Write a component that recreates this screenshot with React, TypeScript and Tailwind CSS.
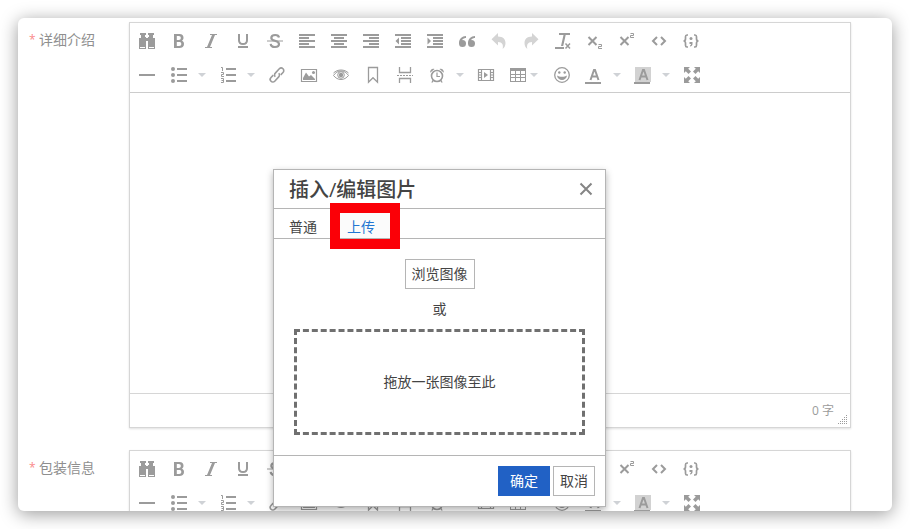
// App.tsx
import { Fragment, type ReactNode } from "react";

type Tool = {
  name: string;
  icon: ReactNode;
  disabled?: boolean;
  menu?: "split" | "inline";
};

const line = { fill: "none", stroke: "currentColor" };

const topRow: Tool[] = [
  {
    name: "查找替换",
    icon: (
      <>
        <path d="M1 0h6v2H6v2h1v1h2V4h1V2H9V0h6v2h-1v3h2v11H9V8H7v8H0V5h2V2H1z" />
        <path d="M1 14.500h5M10 14.500h5" stroke="#fff" />
      </>
    ),
  },
  {
    name: "粗体",
    icon: (
      <path
        fillRule="evenodd"
        d="M3 1h5.500C11.300 1 12.500 2.500 12.500 4.700c0 1.400-.6 2.400-1.600 3 1.400.5 2.100 1.600 2.100 3.200 0 2.500-1.800 4.100-4.700 4.100H3zM5.800 3.100v3.800h1.900c1.500 0 2.100-.7 2.100-1.900s-.6-1.900-2.100-1.900zM5.800 9v3.900h2.300c1.500 0 2.200-.7 2.200-2S9.600 9 8.100 9z"
      />
    ),
  },
  {
    name: "斜体",
    icon: <path d="M7 1h7v1h-2L7 14h2v1H2v-1h2L9 2H7z" />,
  },
  {
    name: "下划线",
    icon: (
      <>
        <path d="M4 1v6.200C4 9.500 5.500 11 8 11s4-1.500 4-3.800V1" strokeWidth="2" {...line} />
        <path d="M3 13h10v2H3z" />
      </>
    ),
  },
  {
    name: "删除线",
    icon: (
      <>
        <path
          d="M12 4.500C11.800 2.900 10.300 2 8.200 2 6 2 4.300 3 4.300 4.900 4.300 8.500 12 7 12 11c0 2-1.800 3-4 3-2.500 0-4.200-1.100-4.300-3.100"
          strokeWidth="2.200"
          {...line}
        />
        <path d="M0 7.500h16v1H0z" />
      </>
    ),
  },
  { name: "左对齐", icon: <path d="M0 1h16v2H0zM0 4h10v2H0zM0 7h16v2H0zM0 10h10v2H0zM0 13h16v2H0z" /> },
  { name: "居中", icon: <path d="M0 1h16v2H0zM3 4h10v2H3zM0 7h16v2H0zM3 10h10v2H3zM0 13h16v2H0z" /> },
  { name: "右对齐", icon: <path d="M0 1h16v2H0zM6 4h10v2H6zM0 7h16v2H0zM6 10h10v2H6zM0 13h16v2H0z" /> },
  {
    name: "减少缩进",
    icon: <path d="M0 1h16v2H0zM6 4h10v2H6zM6 7h10v2H6zM6 10h10v2H6zM0 13h16v2H0zM4 4.500v7L.500 8z" />,
  },
  {
    name: "增加缩进",
    icon: <path d="M0 1h16v2H0zM6 4h10v2H6zM6 7h10v2H6zM6 10h10v2H6zM0 13h16v2H0zM.500 4.500v7L4 8z" />,
  },
  {
    name: "引用",
    icon: (
      <path d="M3.500 7A3.500 3.500 0 1 1 0 10.500L0 10c0-4 3-7 7-7v2C5.700 5 4.400 5.500 3.500 6.500l-.6.7zM12.500 7A3.500 3.500 0 1 1 9 10.500L9 10c0-4 3-7 7-7v2c-1.300 0-2.600.5-3.500 1.500l-.6.7z" />
    ),
  },
  {
    name: "撤销",
    disabled: true,
    icon: <path d="M7 0v3.500c5 0 7.500 2.800 7.500 6.500 0 2.500-1 4.500-2.800 6 .8-4-.2-7-4.700-7v3.500L.500 6.200z" />,
  },
  {
    name: "重做",
    disabled: true,
    icon: <path d="M9 0v3.500c-5 0-7.500 2.800-7.500 6.500 0 2.500 1 4.500 2.800 6-.8-4 .2-7 4.700-7v3.500l6.500-6.300z" />,
  },
  {
    name: "清除格式",
    icon: (
      <>
        <path d="M4 0h11v2h-4.300L8.200 13H6L8.500 2H4zM0 14h9v2H0z" />
        <path d="M10.500 10.500l4.500 5M15 10.500l-4.500 5" strokeWidth="1.500" {...line} />
      </>
    ),
  },
  {
    name: "下标",
    icon: (
      <>
        <path d="M1.500 4l8 8M9.500 4l-8 8" strokeWidth="2" {...line} />
        <path d="M11.500 11.500h3v2h-3v2H15" {...line} />
      </>
    ),
  },
  {
    name: "上标",
    icon: (
      <>
        <path d="M1.500 4l8 8M9.500 4l-8 8" strokeWidth="2" {...line} />
        <path d="M11.500.500h3v2h-3v2H15" {...line} />
      </>
    ),
  },
  {
    name: "源代码",
    icon: <path d="M6 4L2 8l4 4M10 4l4 4-4 4" strokeWidth="2" {...line} />,
  },
  {
    name: "代码示例",
    icon: (
      <>
        <path
          d="M5 2H4C2.800 2 2.500 2.600 2.500 3.700v2C2.500 7 2 8 .500 8 2 8 2.500 9 2.500 10.300v2c0 1.100.3 1.700 1.500 1.700h1M11 2h1c1.200 0 1.500.6 1.500 1.700v2C13.500 7 14 8 15.500 8c-1.500 0-2 1-2 2.300v2c0 1.100-.3 1.700-1.500 1.700h-1"
          strokeWidth="1.700"
          {...line}
        />
        <circle cx="8" cy="5.500" r="1.500" />
        <path d="M6.500 9h3v2c0 1.500-1 2.300-2.500 2.500v-1c.7-.2 1-.6 1-1.500H6.500z" />
      </>
    ),
  },
];

const bottomRow: Tool[] = [
  { name: "水平线", icon: <path d="M0 7h16v2H0z" /> },
  {
    name: "项目符号列表",
    menu: "split",
    icon: (
      <>
        <circle cx="2" cy="2" r="2" />
        <circle cx="2" cy="8" r="2" />
        <circle cx="2" cy="14" r="2" />
        <path d="M6 1h10v2H6zM6 7h10v2H6zM6 13h10v2H6z" />
      </>
    ),
  },
  {
    name: "编号列表",
    menu: "split",
    icon: (
      <>
        <path d="M6 1h10v2H6zM6 7h10v2H6zM6 13h10v2H6z" />
        <path d="M1 .500h1.500V4M1 5.500h2.500v2h-2v2H4M1 11.500h2.500v4H1M1.500 13.500h2" {...line} />
      </>
    ),
  },
  {
    name: "链接",
    icon: (
      <g strokeWidth="1.600" {...line}>
        <path d="M6.300 9.700c-1-1-1-2.600 0-3.600l4-4.300c1-1 2.700-1 3.700 0s1 2.700 0 3.700l-2.300 2.400" />
        <path d="M9.700 6.300c1 1 1 2.600 0 3.600l-4 4.300c-1 1-2.700 1-3.700 0s-1-2.700 0-3.700l2.300-2.400" />
      </g>
    ),
  },
  {
    name: "图片",
    icon: (
      <>
        <path d="M.500 2.500h15v12H.500z" strokeWidth="1.200" {...line} />
        <path d="M2 13v-2l3-5.500L8 9.500 10 8l4 4v1H2z" />
        <circle cx="12.500" cy="5.500" r="1.500" />
      </>
    ),
  },
  {
    name: "预览",
    icon: (
      <>
        <path d="M.500 8.500C2.500 5.500 5 4 8 4s5.500 1.500 7.500 4.500C13.500 11 11 12.500 8 12.500S2.500 11 .500 8.500z" {...line} />
        <path d="M.500 6C4.500 2 11.500 2 15.500 6" {...line} />
        <circle cx="8" cy="8" r="3.300" {...line} />
        <circle cx="8" cy="8" r="2.200" />
      </>
    ),
  },
  {
    name: "书签",
    icon: <path d="M3.500.500h9v14.700L8 10.700 3.500 15.200z" strokeWidth="1.300" {...line} />,
  },
  {
    name: "分页符",
    icon: (
      <>
        <path d="M2.500 0v5.500h11V0M2.500 16v-4.500h11V16" strokeWidth="1.300" {...line} />
        <path d="M0 8.500h16" strokeDasharray="2 1" {...line} />
      </>
    ),
  },
  {
    name: "日期时间",
    menu: "split",
    icon: (
      <>
        <circle cx="8" cy="9" r="5.500" strokeWidth="1.600" {...line} />
        <path d="M8 5.500v4h3" strokeWidth="1.200" {...line} />
        <path d="M1.200 5.700C.700 3.500 3 1 5.500 2zM14.800 5.700c.5-2.200-1.800-4.700-4.300-3.700zM3.500 13l-1.200 2.500h1.500l1-1.700zM12.500 13l1.200 2.500h-1.500l-1-1.700z" />
      </>
    ),
  },
  {
    name: "媒体",
    icon: (
      <>
        <path d="M.500 2.500h15v11H.500zM3.500 2.500v11M12.500 2.500v11" strokeWidth="1.200" {...line} />
        <path d="M1 5.500h3M1 8h3M1 10.500h3M12 5.500h3M12 8h3M12 10.500h3" {...line} />
        <path d="M6 5l4 3-4 3z" />
      </>
    ),
  },
  {
    name: "表格",
    menu: "inline",
    icon: <path fillRule="evenodd" d="M0 1h16v14H0zM1 4v3h4V4zM6 4v3h4V4zM11 4v3h4V4zM1 8v2h4V8zM6 8v2h4V8zM11 8v2h4V8zM1 11v3h4v-3zM6 11v3h4v-3zM11 11v3h4v-3z" />,
  },
  {
    name: "表情",
    icon: (
      <>
        <circle cx="8" cy="8" r="7.300" strokeWidth="1.300" {...line} />
        <circle cx="5.300" cy="5.500" r="1.200" />
        <circle cx="10.700" cy="5.500" r="1.200" />
        <path d="M3 8.500c2.500 1.700 7.500 1.700 10 0-.4 2.800-2.500 4.500-5 4.500s-4.600-1.700-5-4.500z" />
      </>
    ),
  },
  {
    name: "文字颜色",
    menu: "split",
    icon: (
      <>
        <path d="M-1 15h16v2H-1z" />
        <path d="M4.500 13L8 3h1l3.500 10M6 9.500h5" strokeWidth="2" {...line} />
      </>
    ),
  },
  {
    name: "背景颜色",
    menu: "split",
    icon: (
      <>
        <path d="M0 0h16v15H0z" fill="#d2d2d2" />
        <path d="M-1 15h16v2H-1z" />
        <path d="M4.500 13L8 3h1l3.500 10M6 9.500h5" strokeWidth="2" {...line} />
      </>
    ),
  },
  {
    name: "全屏",
    icon: (
      <path d="M0 0h6L4.200 1.800 7 4.500 4.500 7 1.800 4.200 0 6zM16 0v6l-1.800-1.800L11.500 7 9 4.500l2.800-2.700L10 0zM0 16v-6l1.800 1.800L4.500 9 7 11.500l-2.800 2.700L6 16zM16 16h-6l1.800-1.800L9 11.500 11.500 9l2.700 2.800L16 10z" />
    ),
  },
];

function Icon({ children }: { children: ReactNode }) {
  return (
    <svg viewBox="0 0 16 16" className="size-4 shrink-0 overflow-visible fill-current" aria-hidden="true">
      {children}
    </svg>
  );
}

function Caret() {
  return (
    <svg viewBox="0 0 8 4" className="h-1 w-2 shrink-0 fill-[#cfd2d6]" aria-hidden="true">
      <path d="M0 0h8L4 4z" />
    </svg>
  );
}

function ToolRow({ tools }: { tools: Tool[] }) {
  return (
    <div className="flex h-[34px] items-center">
      {tools.map((t) => (
        <Fragment key={t.name}>
          <button
            type="button"
            aria-label={t.name}
            disabled={t.disabled}
            className="flex h-full shrink-0 items-center gap-1 px-2 text-[#9b9b9b] disabled:text-[#d4d4d4]"
          >
            <Icon>{t.icon}</Icon>
            {t.menu === "inline" && <Caret />}
          </button>
          {t.menu === "split" && (
            <button type="button" aria-label={t.name + "选项"} className="flex h-full w-[17px] shrink-0 items-center pl-[3px]">
              <Caret />
            </button>
          )}
        </Fragment>
      ))}
    </div>
  );
}

function EditorField({ id, label, wordCount }: { id: string; label: string; wordCount?: number }) {
  return (
    <div className="flex">
      <label htmlFor={id} className="flex h-9 w-[111px] shrink-0 items-center gap-1 pl-[11px] text-sm text-[#8f8f8f]">
        <span className="w-[6px] text-xs text-[#fa8a8a]">*</span>
        {label}
      </label>
      <div className="min-w-0 flex-1 border border-[#d6d6d6] shadow-[0_1px_2px_rgba(0,0,0,0.12)]">
        <div className="border-b border-[#cccccc] pt-px pl-px">
          <ToolRow tools={topRow} />
          <ToolRow tools={bottomRow} />
        </div>
        <textarea id={id} className="block h-[300px] w-full resize-none p-2 text-sm outline-none" />
        <div className="flex h-[34px] items-center justify-end gap-1 border-t border-[#d6d6d6] pr-[2px] text-xs text-[#9b9b9b]">
          {wordCount !== undefined && <span>{wordCount} 字</span>}
          <svg viewBox="0 0 10 10" className="mb-[2px] size-[10px] self-end fill-[#9b9b9b]" aria-hidden="true">
            <path d="M8 0h1v1H8zM6 2h1v1H6zM8 2h1v1H8zM4 4h1v1H4zM6 4h1v1H6zM8 4h1v1H8zM2 6h1v1H2zM4 6h1v1H4zM6 6h1v1H6zM8 6h1v1H8zM0 8h1v1H0zM2 8h1v1H2zM4 8h1v1H4zM6 8h1v1H6zM8 8h1v1H8z" />
          </svg>
        </div>
      </div>
    </div>
  );
}

function ImageDialog() {
  return (
    <div
      role="dialog"
      aria-labelledby="dialog-title"
      className="w-[333px] border border-[#b5b5b5] bg-white text-sm text-[#444444] shadow-[0_3px_7px_rgba(0,0,0,0.3)]"
    >
      <div className="flex h-[39px] items-center justify-between border-b border-[#b5b5b5] pr-3 pl-[15px]">
        <h2 id="dialog-title" className="pt-[2px] text-xl font-medium">插入/编辑图片</h2>
        <button type="button" aria-label="关闭" className="text-[#858585]">
          <svg viewBox="0 0 14 14" className="size-[14px]" aria-hidden="true">
            <path d="M1.500 1.500l11 11M12.500 1.500l-11 11" strokeWidth="2" {...line} />
          </svg>
        </button>
      </div>

      {/* Tabs */}
      <div role="tablist" className="flex h-[30px] border-b border-[#b5b5b5]">
        <button type="button" role="tab" aria-selected="false" className="px-[15px] pt-[6px]">
          普通
        </button>
        <button type="button" role="tab" aria-selected="true" className="relative bg-[#fbfbfb] px-[15px] pt-[6px] text-[#2276d2]">
          上传
          <span className="pointer-events-none absolute -top-[6px] -right-[10px] -bottom-[11px] -left-[2px] border-10 border-[#fb0007]" />
        </button>
      </div>

      {/* Upload */}
      <div className="flex flex-col items-center p-5">
        <button type="button" className="h-[30px] w-[70px] border border-[#b5b5b5]">浏览图像</button>
        <p className="my-[10px] leading-5">或</p>
        <div className="flex h-[106px] w-full items-center justify-center border-3 border-dashed border-[#707070]">
          拖放一张图像至此
        </div>
      </div>

      <div className="flex justify-end gap-[3px] border-t border-[#b5b5b5] p-[10px]">
        <button type="button" className="h-[30px] w-[52px] bg-[#2161c5] text-white">确定</button>
        <button type="button" className="h-[30px] w-[42px] border border-[#b5b5b5]">取消</button>
      </div>
    </div>
  );
}

export default function App() {
  return (
    <main className="h-screen overflow-hidden bg-white p-[18px] font-['Open_Sans','Noto_Sans_CJK_SC',sans-serif]">
      <div className="relative h-full overflow-hidden rounded-md bg-white shadow-[0_3px_18px_rgba(0,0,0,0.4)]">
        <form className="flex flex-col gap-[22px] pt-1 pr-[41px]">
          <EditorField id="detail" label="详细介绍" wordCount={0} />
          <EditorField id="package" label="包装信息" />
        </form>

        <div className="absolute inset-0 flex items-start justify-center pt-[151px] pr-[31px]">
          <ImageDialog />
        </div>
      </div>
    </main>
  );
}
